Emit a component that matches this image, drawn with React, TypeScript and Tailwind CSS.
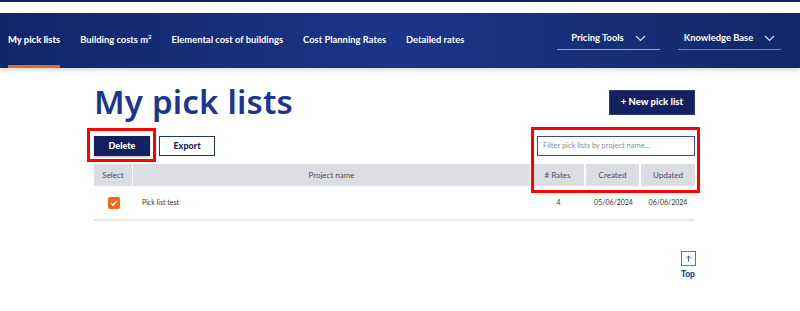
import React from "react";

const Chevron = () => (
  <svg width="11" height="7" viewBox="0 0 11 7" fill="none" className="ml-[11px]">
    <path d="M1 1l4.5 4.5L10 1" stroke="#dfe6f7" strokeWidth="1.1" />
  </svg>
);

export default function App() {
  const font = { fontFamily: 'Lato, "Open Sans", sans-serif' };
  return (
    <div className="w-[800px] h-[311px] bg-white relative overflow-hidden" style={font}>
      <div className="h-[2px] bg-[#0d1f5e]" />
      <div className="h-[11px] bg-white" />
      <nav className="h-[55px] flex items-stretch bg-gradient-to-r from-[#10266a] via-[#1b3688] to-[#112767] shadow-[0_3px_4px_rgba(0,0,0,0.12)] relative z-10 text-white text-[9.4px] font-bold whitespace-nowrap">
        <div className="flex items-stretch pl-[8px] gap-[20px]">
          <div className="flex items-center border-b-[3px] border-[#ee6a1f] pt-[3px] font-black">My pick lists</div>
          <div className="flex items-center">
            <span>Building costs m<span className="text-[6px] relative -top-[4px]">2</span></span>
          </div>
          <div className="flex items-center">Elemental cost of buildings</div>
          <div className="flex items-center">Cost Planning Rates</div>
          <div className="flex items-center">Detailed rates</div>
        </div>
        <div className="ml-auto flex items-start pt-[14px] pr-[19px] gap-[18px]">
          <div className="w-[103px] h-[23px] flex items-center justify-center border-b-[1.5px] border-[#8ea6dd]">
            <span>Pricing Tools</span>
            <Chevron />
          </div>
          <div className="w-[103px] h-[23px] flex items-center justify-center border-b-[1.5px] border-[#3c9fb8]">
            <span>Knowledge Base</span>
            <Chevron />
          </div>
        </div>
      </nav>

      <div className="ml-[94px] w-[601px] pt-[14px]">
        <div className="flex items-start justify-between">
          <h1 className="text-[33px] leading-[40px] font-semibold text-[#1d3592] tracking-[0.2px]" style={{ fontFamily: '"Noto Sans", "Open Sans", sans-serif' }}>My pick lists</h1>
          <button className="mt-[8px] w-[86px] h-[25px] bg-[#13225e] border border-[#2b3b7a] text-white text-[9.5px] font-black flex items-center justify-center">+ New pick list</button>
        </div>

        <div className="flex items-center justify-between mt-[14px]">
          <div className="flex items-center gap-[9px]">
            <div className="relative">
              <button className="w-[56px] h-[20px] bg-[#13225e] text-white text-[9px] font-black flex items-center justify-center shadow-[0_1px_2px_rgba(0,0,0,0.3)]">Delete</button>
              <div className="absolute left-[-7px] top-[-8px] w-[69px] h-[34px] border-[3px] border-[#ff0000] pointer-events-none" />
            </div>
            <button className="w-[56px] h-[20px] bg-white border border-[#24346f] text-[#1a2656] text-[9px] font-black flex items-center justify-center">Export</button>
          </div>
          <div className="w-[158px] h-[20px] border border-[#3b4a85] flex items-center px-[5px] text-[7.5px] text-[#8a8d96]">Filter pick lists by project name...</div>
        </div>

        <div className="relative mt-[8px]">
          <div className="h-[22px] flex bg-[#dcdde1] text-[8px] text-[#4a4d55]">
            <div className="w-[39px] flex items-center justify-center border-r border-white">Select</div>
            <div className="flex-1 flex items-center justify-center border-r border-white">Project name</div>
            <div className="w-[55px] flex items-center justify-center border-r-2 border-white">
              # Rates
            </div>
            <div className="w-[55px] flex items-center justify-center border-r-2 border-white">Created</div>
            <div className="w-[54px] flex items-center justify-center">Updated</div>
          </div>
          <div className="h-[35px] flex items-center border-b-2 border-[#e8e9ec] text-[7px] text-[#333]">
            <div className="w-[39px] flex items-center justify-center pt-[1px]">
              <div className="w-[12px] h-[12px] rounded-[2px] bg-[#ea6a1e] flex items-center justify-center">
                <svg width="8" height="6" viewBox="0 0 8 6" fill="none">
                  <path d="M1 3l2 2 4-4" stroke="white" strokeWidth="1.3" />
                </svg>
              </div>
            </div>
            <div className="flex-1 pl-[9px]">Pick list test</div>
            <div className="w-[55px] text-center">4</div>
            <div className="w-[55px] text-center">05/06/2024</div>
            <div className="w-[54px] text-center">06/06/2024</div>
          </div>
          <div className="absolute left-[437px] top-[-37px] w-[169px] h-[66px] border-[3px] border-[#ff0000] pointer-events-none" />
        </div>

        <div className="flex justify-end mt-[30px]">
          <div className="flex flex-col items-center w-[22px] mr-[-4px]">
            <div className="w-[15px] h-[15px] border border-[#5b72c4] flex items-center justify-center">
              <svg width="7" height="7" viewBox="0 0 7 7" fill="none">
                <path d="M3.5 6.5V1M1.3 3.2L3.5 1l2.2 2.2" stroke="#2e4aa8" strokeWidth="0.9" />
              </svg>
            </div>
            <div className="text-[8.5px] font-black text-[#243f9a] mt-[2px]">Top</div>
          </div>
        </div>
      </div>
    </div>
  );
}
